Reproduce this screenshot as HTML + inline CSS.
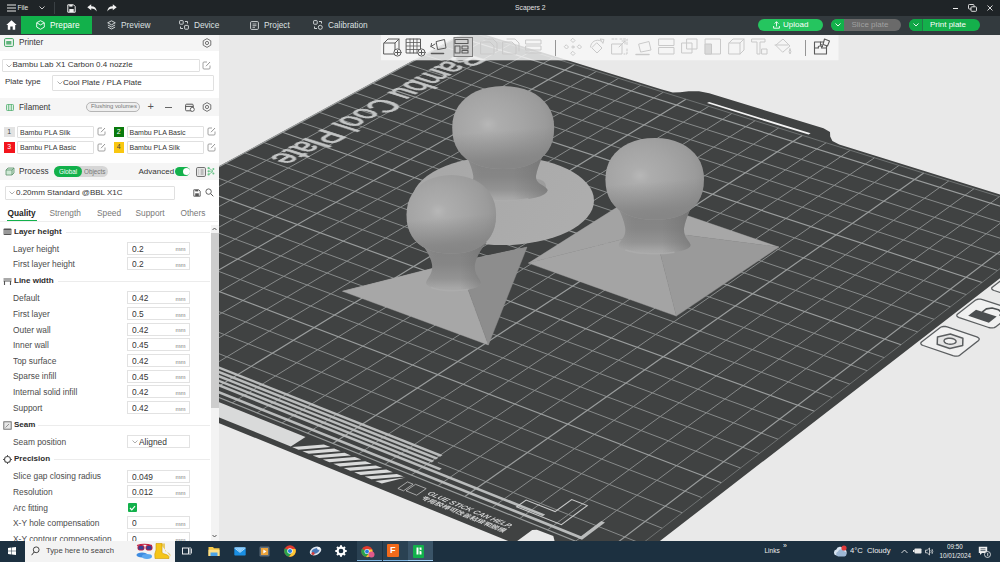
<!DOCTYPE html>
<html><head><meta charset="utf-8"><title>Scapers 2</title>
<style>
html,body{margin:0;padding:0;width:1000px;height:562px;overflow:hidden;background:#e9e9e9;font-family:"Liberation Sans","Noto Sans CJK SC",sans-serif;}
*{box-sizing:border-box}
.t,.lbl,.grp,.tab,.inp b,.inp i,.ftxt{opacity:0.99}
.abs{position:absolute}
.t{position:absolute;white-space:nowrap;line-height:1;color:#3a3a3a}
#titlebar{position:absolute;left:0;top:0;width:1000px;height:16px;background:#1f2427}
#tabbar{position:absolute;left:0;top:16px;width:1000px;height:18.7px;z-index:2;background:#333a3e}
#sidebar{position:absolute;left:0;top:34px;width:219px;height:508px;background:#fff;overflow:hidden}
#taskbar{position:absolute;left:0;top:541px;width:1000px;height:21px;background:#1c3040}
.hdr{position:absolute;left:0;width:219px;background:#f5f5f5}
.box{position:absolute;border:1px solid #e0e0e0;background:#fff;border-radius:1px}
.lbl{position:absolute;white-space:nowrap;line-height:1;font-size:8.4px;margin-top:0.4px;color:#4a4a4a;left:13px}
.grp{position:absolute;white-space:nowrap;line-height:1;font-size:8px;color:#2a2a2a;font-weight:bold;left:14px}
.inp{position:absolute;left:127px;width:63px;height:13px;border:1px solid #e2e2e2;background:#fff}
.inp b{position:absolute;left:4px;top:2px;font-weight:normal;font-size:8.4px;line-height:1;color:#333}
.inp i{position:absolute;right:3.5px;top:3.8px;font-style:normal;font-size:6px;line-height:1;color:#7c7c7c}
.gl{position:absolute;height:1px;background:#ececec;right:9px}
.tab{position:absolute;white-space:nowrap;line-height:1;font-size:8.3px;color:#dfe3e4;top:4.7px}
</style></head>
<body>
<svg width="782" height="508" viewBox="218 34 782 508" style="position:absolute;left:218px;top:34px">
<rect x="218" y="34" width="782" height="508" fill="#e9e9e9"/>
<polygon points="-43.8,309.3 -45.3,310.3 -46.3,311.5 -46.7,312.7 -46.4,313.9 -45.5,314.9 -44.0,315.7 513.9,543.4 532.2,530.0 536.9,529.7 553.3,535.9 559.9,562.2 598.7,578.0 601.1,578.8 603.9,579.1 606.7,579.1 609.4,578.7 611.8,577.8 613.7,576.7 1073.1,221.9 1074.0,220.9 1074.2,219.9 1073.9,218.8 1072.9,217.7 1071.5,216.8 1069.6,216.1 839.2,144.6 832.4,141.0 830.2,136.6 830.0,132.0 823.5,128.3 709.2,93.3 699.0,91.2 688.6,91.3 680.1,92.3 672.7,92.6 661.1,89.3 475.8,31.8 474.0,31.4 472.0,31.2 469.9,31.3 467.9,31.5 466.1,32.0 464.6,32.6" fill="#404242"/>
<g stroke="#878a8a" stroke-width="1.0"><line x1="-2.4" y1="308.4" x2="488.7" y2="38.0"/><line x1="437.9" y1="462.5" x2="641.9" y2="543.8"/><line x1="20.1" y1="317.4" x2="509.9" y2="44.5"/><line x1="19.8" y1="275.3" x2="662.2" y2="528.2"/><line x1="42.7" y1="326.5" x2="531.3" y2="51.2"/><line x1="41.6" y1="263.4" x2="682.2" y2="512.8"/><line x1="65.6" y1="335.8" x2="552.8" y2="57.9"/><line x1="63.1" y1="251.7" x2="702.0" y2="497.7"/><line x1="112.0" y1="354.5" x2="596.4" y2="71.4"/><line x1="105.3" y1="228.7" x2="740.5" y2="468.0"/><line x1="135.6" y1="364.0" x2="618.5" y2="78.3"/><line x1="126.0" y1="217.5" x2="759.4" y2="453.5"/><line x1="159.4" y1="373.5" x2="640.8" y2="85.2"/><line x1="146.4" y1="206.4" x2="778.0" y2="439.2"/><line x1="183.4" y1="383.2" x2="663.3" y2="92.2"/><line x1="166.5" y1="195.4" x2="796.4" y2="425.1"/><line x1="232.2" y1="402.9" x2="708.8" y2="106.3"/><line x1="206.1" y1="173.8" x2="832.2" y2="397.6"/><line x1="257.0" y1="412.9" x2="731.8" y2="113.5"/><line x1="225.5" y1="163.3" x2="849.8" y2="384.1"/><line x1="282.0" y1="423.0" x2="755.1" y2="120.7"/><line x1="244.7" y1="152.8" x2="867.2" y2="370.7"/><line x1="307.3" y1="433.2" x2="778.6" y2="128.0"/><line x1="263.7" y1="142.5" x2="884.2" y2="357.6"/><line x1="358.7" y1="453.9" x2="826.1" y2="142.8"/><line x1="300.9" y1="122.3" x2="917.7" y2="331.9"/><line x1="384.9" y1="464.4" x2="850.2" y2="150.3"/><line x1="319.2" y1="112.3" x2="934.1" y2="319.3"/><line x1="411.2" y1="475.0" x2="874.5" y2="157.8"/><line x1="337.2" y1="102.5" x2="950.3" y2="306.8"/><line x1="437.9" y1="485.8" x2="899.0" y2="165.4"/><line x1="355.1" y1="92.8" x2="966.3" y2="294.6"/><line x1="492.1" y1="507.6" x2="948.8" y2="180.9"/><line x1="390.1" y1="73.7" x2="997.6" y2="270.5"/><line x1="519.6" y1="518.7" x2="974.0" y2="188.7"/><line x1="407.3" y1="64.3" x2="1013.0" y2="258.7"/><line x1="547.5" y1="529.9" x2="999.4" y2="196.6"/><line x1="424.4" y1="55.0" x2="1028.1" y2="247.1"/><line x1="575.6" y1="541.2" x2="1025.1" y2="204.6"/><line x1="441.2" y1="45.9" x2="1043.1" y2="235.6"/></g>
<g stroke="#9a9d9d" stroke-width="1.18"><line x1="-24.6" y1="299.4" x2="467.7" y2="31.4"/><line x1="-24.6" y1="299.4" x2="621.3" y2="559.6"/><line x1="88.7" y1="345.1" x2="574.5" y2="64.6"/><line x1="84.3" y1="240.1" x2="721.4" y2="482.7"/><line x1="207.7" y1="393.0" x2="685.9" y2="99.2"/><line x1="186.5" y1="184.5" x2="814.4" y2="411.3"/><line x1="332.9" y1="443.5" x2="802.2" y2="135.4"/><line x1="282.4" y1="132.3" x2="901.1" y2="344.7"/><line x1="464.9" y1="496.6" x2="923.8" y2="173.1"/><line x1="372.7" y1="83.2" x2="982.1" y2="282.5"/><line x1="604.1" y1="552.7" x2="1051.0" y2="212.6"/><line x1="457.8" y1="36.8" x2="1057.9" y2="224.2"/></g>
<g stroke="#7a7d7e" stroke-width="0.8"><line x1="621.3" y1="559.6" x2="1066.6" y2="217.5"/><line x1="467.7" y1="31.4" x2="1066.6" y2="217.5"/></g>
<g><polygon points="22.0,290.7 440.1,456.7 442.6,454.9 24.7,289.3" fill="#babcbc"/><polygon points="17.6,293.2 435.9,459.6 438.4,457.8 20.3,291.7" fill="#babcbc"/><polygon points="13.3,295.5 431.8,462.4 434.3,460.7 15.9,294.1" fill="#babcbc"/><polygon points="8.6,298.1 439.3,470.2 441.8,468.5 11.3,296.6" fill="#babcbc"/><polygon points="4.1,300.6 542.7,516.3 545.2,514.5 6.8,299.1" fill="#babcbc"/><polygon points="-2.8,304.4 580.5,538.9 583.0,537.0 -0.1,302.9" fill="#babcbc"/><polygon points="578.4,538.2 582.0,539.7 605.0,522.5 601.3,521.0" fill="#babcbc"/><polygon points="-26.5,317.4 290.8,446.5 305.5,437.0 -11.3,309.1" fill="#d9dada"/><polygon points="292.1,447.1 298.5,449.7 330.4,447.0 323.9,444.4" fill="#dadbdb"/><polygon points="302.3,451.2 308.8,453.8 340.7,451.2 334.2,448.6" fill="#dadbdb"/><polygon points="312.6,455.4 319.1,458.0 351.0,455.4 344.6,452.8" fill="#dadbdb"/><polygon points="322.9,459.6 329.4,462.2 361.4,459.6 354.9,457.0" fill="#dadbdb"/><polygon points="333.3,463.8 339.8,466.5 371.9,463.8 365.4,461.2" fill="#dadbdb"/><polygon points="343.7,468.1 350.2,470.7 382.4,468.0 375.8,465.4" fill="#dadbdb"/><polygon points="354.2,472.3 360.7,475.0 392.9,472.3 386.3,469.6" fill="#dadbdb"/><polygon points="364.7,476.6 371.3,479.3 403.5,476.6 396.9,473.9" fill="#dadbdb"/><polygon points="375.2,480.9 381.8,483.6 405.6,477.4 405.6,477.4" fill="#dadbdb"/><polygon points="397.9,488.5 407.5,481.9 413.1,484.2 403.5,490.8" fill="none" stroke="#d0d0d0" stroke-width="0.7"/><polygon points="406.0,490.8 415.5,484.3 426.2,488.6 416.7,495.2" fill="none" stroke="#d0d0d0" stroke-width="0.7"/><polygon points="516.7,506.8 526.1,500.0 555.1,511.6 571.7,499.5 587.2,505.6 561.4,524.7" fill="none" stroke="#c9caca" stroke-width="1.1"/></g>
<polygon points="707.0,103.1 808.6,134.6 810.6,133.3 709.1,101.9" fill="#f4f4f4"/>
<g opacity="0.99">
<text transform="matrix(-1.6667 0.9176 -2.1163 -0.6664 463.52 51.47)" font-family="Liberation Sans,sans-serif" font-size="16.3" fill="#c6c8c8" stroke="#c6c8c8" stroke-width="0.45" textLength="117" lengthAdjust="spacingAndGlyphs">Bambu Cool Plate</text>
<text transform="matrix(2.6867 1.0894 -2.1580 1.4995 426.41 494.33)" font-family="Liberation Sans,sans-serif" font-size="2.9" font-weight="bold" font-style="italic" fill="#d4d5d5" textLength="31" lengthAdjust="spacingAndGlyphs">GLUE STICK CAN HELP.</text>
<text transform="matrix(2.6890 1.0941 -2.1673 1.5059 420.14 498.69)" font-family="Liberation Sans,Noto Sans CJK SC,sans-serif" font-size="2.5" font-weight="bold" fill="#d4d5d5" textLength="31" lengthAdjust="spacingAndGlyphs">专用胶棒可改善粘接和脱模</text>
</g>
<polygon points="921.5,342.0 920.8,342.9 920.9,343.9 921.7,344.8 923.2,345.5 952.9,355.7 954.8,356.1 956.8,356.2 958.6,355.8 960.0,355.1 978.6,340.4 979.2,339.5 979.1,338.5 978.2,337.6 976.8,336.9 947.2,326.9 945.4,326.5 943.4,326.5 941.6,326.8 940.3,327.5" fill="#f0f0f0" stroke="#5b5e60" stroke-width="1.3" stroke-linejoin="round"/>
<polygon points="962.7,345.5 962.9,338.2 950.3,334.0 937.5,336.9 937.2,344.2 949.8,348.5" fill="#e4e4e4" stroke="#5b5e60" stroke-width="1.5" stroke-linejoin="round"/>
<polygon points="955.3,343.0 956.0,342.0 956.0,341.0 955.3,340.0 954.0,339.1 952.2,338.5 950.1,338.2 948.1,338.3 946.2,338.7 944.8,339.4 944.1,340.4 944.1,341.4 944.7,342.4 946.1,343.3 947.9,343.9 950.0,344.2 952.0,344.1 953.9,343.7" fill="#f0f0f0" stroke="#5b5e60" stroke-width="1.4"/>
<polygon points="957.4,314.2 956.8,315.1 956.9,316.0 957.7,316.9 959.2,317.6 988.7,327.5 990.5,327.9 992.5,327.9 994.3,327.6 995.6,326.9 1013.6,312.7 1014.3,311.8 1014.1,310.8 1013.3,309.9 1011.8,309.2 982.5,299.6 980.7,299.2 978.7,299.1 976.9,299.5 975.6,300.1" fill="#f0f0f0" stroke="#5b5e60" stroke-width="1.3" stroke-linejoin="round"/>
<polygon points="968.2,315.8 988.9,322.7 996.7,316.6 976.0,309.7" fill="#4b4e50"/>
<polyline points="982.5,311.9 986.3,308.9 992.1,308.0 998.4,309.7 1001.7,312.6 1000.0,315.2" fill="none" stroke="#4b4e50" stroke-width="1.6" stroke-linecap="round" stroke-linejoin="round"/>
<polygon points="992.3,287.2 991.7,288.0 991.8,289.0 992.7,289.9 994.1,290.5 1023.3,300.1 1025.2,300.5 1027.1,300.5 1028.9,300.2 1030.2,299.6 1047.7,285.7 1048.3,284.9 1048.1,283.9 1047.3,283.1 1045.8,282.4 1016.8,273.0 1014.9,272.6 1013.0,272.6 1011.3,272.9 1010.0,273.5" fill="#f0f0f0" stroke="#5b5e60" stroke-width="1.3" stroke-linejoin="round"/>
<polygon points="1026.2,261.0 1025.6,261.8 1025.8,262.7 1026.6,263.6 1028.1,264.2 1057.0,273.5 1058.9,273.9 1060.8,273.9 1062.5,273.6 1063.7,273.0 1080.8,259.5 1081.3,258.7 1081.2,257.8 1080.3,257.0 1078.8,256.3 1050.0,247.2 1048.2,246.8 1046.3,246.8 1044.6,247.1 1043.4,247.7" fill="#f0f0f0" stroke="#5b5e60" stroke-width="1.3" stroke-linejoin="round"/>
<defs>
<radialGradient id="sph" cx="0.38" cy="0.46" r="0.72" fx="0.35" fy="0.46">
<stop offset="0" stop-color="#b7b7b7"/><stop offset="0.14" stop-color="#adadad"/><stop offset="0.45" stop-color="#a5a5a5"/><stop offset="0.75" stop-color="#9b9b9b"/><stop offset="1" stop-color="#8b8b8b"/></radialGradient>
<linearGradient id="sphv" x1="0" x2="0.1" y1="0" y2="1"><stop offset="0" stop-color="#868686" stop-opacity="0"/><stop offset="0.58" stop-color="#868686" stop-opacity="0.0"/><stop offset="0.78" stop-color="#868686" stop-opacity="0.5"/><stop offset="0.92" stop-color="#868686" stop-opacity="0.9"/><stop offset="1" stop-color="#868686" stop-opacity="1"/></linearGradient>
<linearGradient id="neck" x1="0" x2="0" y1="0" y2="1"><stop offset="0" stop-color="#828282"/><stop offset="0.45" stop-color="#868686"/><stop offset="0.75" stop-color="#939393"/><stop offset="0.93" stop-color="#a6a6a6"/><stop offset="1" stop-color="#a9a9a9"/></linearGradient>
<linearGradient id="neckh" x1="0" x2="1" y1="0" y2="0"><stop offset="0" stop-color="#b0b0b0" stop-opacity="0.25"/><stop offset="0.25" stop-color="#909090" stop-opacity="0"/><stop offset="0.6" stop-color="#707070" stop-opacity="0"/><stop offset="1" stop-color="#6c6c6c" stop-opacity="0.55"/></linearGradient>
<linearGradient id="cone" x1="0" x2="1" y1="0" y2="0.3"><stop offset="0" stop-color="#a7a7a7"/><stop offset="0.55" stop-color="#aaaaaa"/><stop offset="1" stop-color="#adadad"/></linearGradient>
</defs>
<ellipse cx="503" cy="200.5" rx="91" ry="44.5" fill="url(#cone)"/>
<ellipse cx="536" cy="186" rx="10" ry="7" fill="#808080" opacity="0.35"/>
<path d="M467.0 156.6 C471.4 166.9 473.4 174.3 473.4 177.3 C473.4 184.3 463.7 185.6 461.7 190.0 A43.0 11.0 0 0 0 547.7 190.0 C545.7 185.6 536.0 184.3 536.0 177.3 C536.0 174.3 538.0 166.9 542.4 156.6 Z" fill="url(#neck)"/><path d="M467.0 156.6 C471.4 166.9 473.4 174.3 473.4 177.3 C473.4 184.3 463.7 185.6 461.7 190.0 A43.0 11.0 0 0 0 547.7 190.0 C545.7 185.6 536.0 184.3 536.0 177.3 C536.0 174.3 538.0 166.9 542.4 156.6 Z" fill="url(#neckh)"/><path d="M469.4 196.1 A43.0 11.0 0 0 0 528.4 198.8" fill="none" stroke="#aeaeae" stroke-width="1.6" opacity="0.7"/><polygon points="554.2,127.5 553.8,134.6 552.7,140.3 550.8,145.5 548.2,150.2 544.9,154.5 540.9,158.2 536.3,161.4 531.1,164.1 525.3,166.2 518.9,167.8 511.9,168.7 503.2,169.0 494.5,168.7 487.5,167.8 481.1,166.2 475.3,164.1 470.1,161.4 465.5,158.2 461.5,154.5 458.2,150.2 455.6,145.5 453.7,140.3 452.6,134.6 452.2,127.5 452.6,121.3 453.8,115.7 455.8,110.6 458.6,105.8 462.1,101.4 466.3,97.5 471.1,94.1 476.4,91.3 482.3,89.0 488.7,87.4 495.5,86.4 503.2,86.1 510.9,86.4 517.7,87.4 524.1,89.0 530.0,91.3 535.3,94.1 540.1,97.5 544.3,101.4 547.8,105.8 550.6,110.6 552.6,115.7 553.8,121.3" fill="url(#sph)"/><polygon points="554.2,127.5 553.8,134.6 552.7,140.3 550.8,145.5 548.2,150.2 544.9,154.5 540.9,158.2 536.3,161.4 531.1,164.1 525.3,166.2 518.9,167.8 511.9,168.7 503.2,169.0 494.5,168.7 487.5,167.8 481.1,166.2 475.3,164.1 470.1,161.4 465.5,158.2 461.5,154.5 458.2,150.2 455.6,145.5 453.7,140.3 452.6,134.6 452.2,127.5 452.6,121.3 453.8,115.7 455.8,110.6 458.6,105.8 462.1,101.4 466.3,97.5 471.1,94.1 476.4,91.3 482.3,89.0 488.7,87.4 495.5,86.4 503.2,86.1 510.9,86.4 517.7,87.4 524.1,89.0 530.0,91.3 535.3,94.1 540.1,97.5 544.3,101.4 547.8,105.8 550.6,110.6 552.6,115.7 553.8,121.3" fill="url(#sphv)"/>
<polygon points="528.5,263.1 633.2,197.0 654.5,231.0" fill="#a3a3a3" stroke="#a3a3a3" stroke-width="0.4"/>
<polygon points="633.2,197.0 778.9,247.1 654.5,231.0" fill="#a7a7a7" stroke="#a7a7a7" stroke-width="0.4"/>
<polygon points="528.5,263.1 676.3,316.1 654.5,231.0" fill="#a4a4a4" stroke="#a4a4a4" stroke-width="0.4"/>
<polygon points="676.3,316.1 778.9,247.1 654.5,231.0" fill="#9a9a9a" stroke="#9a9a9a" stroke-width="0.4"/>
<path d="M618.2 207.5 C623.4 218.6 625.4 226.6 625.4 229.6 C625.4 238.1 620.7 239.6 618.7 245.0 A36.0 9.0 0 0 0 690.7 245.0 C688.7 239.6 684.0 238.1 684.0 229.6 C684.0 226.6 686.0 218.6 691.2 207.5 Z" fill="url(#neck)"/><path d="M618.2 207.5 C623.4 218.6 625.4 226.6 625.4 229.6 C625.4 238.1 620.7 239.6 618.7 245.0 A36.0 9.0 0 0 0 690.7 245.0 C688.7 239.6 684.0 238.1 684.0 229.6 C684.0 226.6 686.0 218.6 691.2 207.5 Z" fill="url(#neckh)"/><path d="M625.2 249.9 A36.0 9.0 0 0 0 674.5 252.2" fill="none" stroke="#aeaeae" stroke-width="1.6" opacity="0.7"/><polygon points="704.0,179.2 703.6,186.1 702.5,191.7 700.7,196.8 698.2,201.4 695.0,205.5 691.2,209.2 686.7,212.3 681.7,214.9 676.1,217.0 669.9,218.5 663.1,219.4 654.7,219.7 646.3,219.4 639.5,218.5 633.3,217.0 627.7,214.9 622.7,212.3 618.2,209.2 614.4,205.5 611.2,201.4 608.7,196.8 606.9,191.7 605.8,186.1 605.4,179.2 605.8,173.0 607.0,167.5 608.9,162.3 611.6,157.6 615.0,153.2 619.0,149.4 623.6,146.0 628.8,143.2 634.5,140.9 640.7,139.3 647.3,138.3 654.7,138.0 662.1,138.3 668.7,139.3 674.9,140.9 680.6,143.2 685.8,146.0 690.4,149.4 694.4,153.2 697.8,157.6 700.5,162.3 702.4,167.5 703.6,173.0" fill="url(#sph)"/><polygon points="704.0,179.2 703.6,186.1 702.5,191.7 700.7,196.8 698.2,201.4 695.0,205.5 691.2,209.2 686.7,212.3 681.7,214.9 676.1,217.0 669.9,218.5 663.1,219.4 654.7,219.7 646.3,219.4 639.5,218.5 633.3,217.0 627.7,214.9 622.7,212.3 618.2,209.2 614.4,205.5 611.2,201.4 608.7,196.8 606.9,191.7 605.8,186.1 605.4,179.2 605.8,173.0 607.0,167.5 608.9,162.3 611.6,157.6 615.0,153.2 619.0,149.4 623.6,146.0 628.8,143.2 634.5,140.9 640.7,139.3 647.3,138.3 654.7,138.0 662.1,138.3 668.7,139.3 674.9,140.9 680.6,143.2 685.8,146.0 690.4,149.4 694.4,153.2 697.8,157.6 700.5,162.3 702.4,167.5 703.6,173.0" fill="url(#sphv)"/>
<polygon points="342.6,291.3 527.0,247.3 458.0,262.0" fill="#a6a6a6" stroke="#a6a6a6" stroke-width="0.4"/>
<polygon points="342.6,291.3 488.4,345.0 458.0,262.0" fill="#a7a7a7" stroke="#a7a7a7" stroke-width="0.4"/>
<polygon points="488.4,345.0 527.0,247.3 458.0,262.0" fill="#8d8d8d" stroke="#8d8d8d" stroke-width="0.4"/>
<path d="M420.3 241.9 C430.2 254.1 432.2 263.3 432.2 266.3 C432.2 275.2 428.0 276.8 426.0 282.5 A27.5 8.5 0 0 0 481.0 282.5 C479.0 276.8 474.8 275.2 474.8 266.3 C474.8 263.3 476.8 254.1 486.7 241.9 Z" fill="url(#neck)"/><path d="M420.3 241.9 C430.2 254.1 432.2 263.3 432.2 266.3 C432.2 275.2 428.0 276.8 426.0 282.5 A27.5 8.5 0 0 0 481.0 282.5 C479.0 276.8 474.8 275.2 474.8 266.3 C474.8 263.3 476.8 254.1 486.7 241.9 Z" fill="url(#neckh)"/><path d="M430.9 287.2 A27.5 8.5 0 0 0 468.6 289.3" fill="none" stroke="#aeaeae" stroke-width="1.6" opacity="0.7"/><polygon points="496.1,214.6 495.8,221.2 494.8,226.6 493.1,231.5 490.8,235.9 487.9,239.9 484.4,243.5 480.4,246.5 475.8,249.0 470.7,251.0 465.1,252.4 458.9,253.3 451.3,253.6 443.7,253.3 437.5,252.4 431.9,251.0 426.8,249.0 422.2,246.5 418.2,243.5 414.7,239.9 411.8,235.9 409.5,231.5 407.8,226.6 406.8,221.2 406.5,214.6 406.9,208.7 407.9,203.4 409.7,198.4 412.1,193.9 415.2,189.7 418.8,186.0 423.1,182.8 427.8,180.0 433.0,177.9 438.6,176.4 444.6,175.4 451.3,175.1 458.0,175.4 464.0,176.4 469.6,177.9 474.8,180.0 479.5,182.8 483.8,186.0 487.4,189.7 490.5,193.9 492.9,198.4 494.7,203.4 495.7,208.7" fill="url(#sph)"/><polygon points="496.1,214.6 495.8,221.2 494.8,226.6 493.1,231.5 490.8,235.9 487.9,239.9 484.4,243.5 480.4,246.5 475.8,249.0 470.7,251.0 465.1,252.4 458.9,253.3 451.3,253.6 443.7,253.3 437.5,252.4 431.9,251.0 426.8,249.0 422.2,246.5 418.2,243.5 414.7,239.9 411.8,235.9 409.5,231.5 407.8,226.6 406.8,221.2 406.5,214.6 406.9,208.7 407.9,203.4 409.7,198.4 412.1,193.9 415.2,189.7 418.8,186.0 423.1,182.8 427.8,180.0 433.0,177.9 438.6,176.4 444.6,175.4 451.3,175.1 458.0,175.4 464.0,176.4 469.6,177.9 474.8,180.0 479.5,182.8 483.8,186.0 487.4,189.7 490.5,193.9 492.9,198.4 494.7,203.4 495.7,208.7" fill="url(#sphv)"/>
<rect x="381" y="34" width="457.5" height="26.3" fill="#f8f8f8" opacity="0.82"/>
<g transform="translate(383 38)" fill="none" stroke="#5a5a5a" stroke-width="1.0" stroke-linejoin="round" stroke-linecap="round"><path d="M1 5L5 1H16V12L12 16H1Z M1 5H12V16 M12 5L16 1"/><circle cx="14.5" cy="14.5" r="3.6" fill="#f7f7f7"/><path d="M12.5 14.5H16.5M14.5 12.5V16.5"/></g>
<g transform="translate(405.5 38)" fill="none" stroke="#5a5a5a" stroke-width="1.0" stroke-linejoin="round" stroke-linecap="round"><rect x="1" y="1" width="14" height="14"/><path d="M4.5 1V15M8 1V15M11.5 1V15M1 4.5H15M1 8H15M1 11.5H15" stroke-width="0.8"/><circle cx="16" cy="14.5" r="3.6" fill="#f7f7f7"/><path d="M14 14.5H18M16 12.5V16.5"/></g>
<g transform="translate(429.5 38)" fill="none" stroke="#5a5a5a" stroke-width="1.0" stroke-linejoin="round" stroke-linecap="round"><path d="M7 3.5L15 1.5L16.5 10L8.5 11.5Z"/><path d="M2 15.5H14" stroke-width="1.6"/><path d="M1.5 8.5L5 10.5M1.5 8.5L2 5.5M1.5 8.5L5.5 6"/></g>
<rect x="454" y="37.5" width="18.5" height="19" fill="#cfcfcf" stroke="#7d7d7d" stroke-width="1"/>
<g transform="translate(453.5 38)" fill="none" stroke="#5a5a5a" stroke-width="1.1" stroke-linejoin="round" stroke-linecap="round"><rect x="1.5" y="1.5" width="13" height="4"/><rect x="1.5" y="8" width="5" height="7"/><rect x="8.5" y="8" width="6" height="3"/><rect x="8.5" y="12.5" width="6" height="2.5"/></g>
<g transform="translate(480 38)" fill="none" stroke="#c9c9c9" stroke-width="1.0" stroke-linejoin="round" stroke-linecap="round"><path d="M1 4H10L14 8V16H1Z M5 1H13L17 5V13"/></g>
<g transform="translate(502 38)" fill="none" stroke="#c9c9c9" stroke-width="1.0" stroke-linejoin="round" stroke-linecap="round"><path d="M1 4H10L14 8V16H1Z M5 1H13L17 5V13"/></g>
<g transform="translate(525 38)" fill="none" stroke="#c9c9c9" stroke-width="1.0" stroke-linejoin="round" stroke-linecap="round"><rect x="1" y="2" width="15" height="4"/><rect x="1" y="8" width="15" height="4"/><path d="M1 15H16"/></g>
<line x1="555.5" y1="40" x2="555.5" y2="56" stroke="#8a8a8a" stroke-width="0.9"/>
<g transform="translate(564 38)" fill="none" stroke="#c9c9c9" stroke-width="1.0" stroke-linejoin="round" stroke-linecap="round"><path d="M9 0.5L11 2.5L9 4.5L7 2.5Z M9 13.5L11 15.5L9 17.5L7 15.5Z M2.5 7L4.5 9L2.5 11L0.5 9Z M15.5 7L17.5 9L15.5 11L13.5 9Z"/><circle cx="9" cy="9" r="1.1"/></g>
<g transform="translate(588 38)" fill="none" stroke="#c9c9c9" stroke-width="1.0" stroke-linejoin="round" stroke-linecap="round"><path d="M9 5L14 10L9 15L4 10Z"/><path d="M2.5 9A7 7 0 0 1 13 3"/><path d="M12.5 1L16 1.5L15 5Z"/></g>
<g transform="translate(611 38)" fill="none" stroke="#c9c9c9" stroke-width="1.0" stroke-linejoin="round" stroke-linecap="round"><rect x="1" y="6" width="10" height="10"/><path d="M1 1H6M9 1H16V8M16 11V16H13" stroke-dasharray="2 1.5"/><path d="M8 9L14 3M14 3H11M14 3V6"/></g>
<g transform="translate(635 38)" fill="none" stroke="#c9c9c9" stroke-width="1.0" stroke-linejoin="round" stroke-linecap="round"><path d="M4 6L14 3.5L16 12L6 14Z"/><path d="M1 16.5H14" stroke-width="1.5"/></g>
<g transform="translate(658 38)" fill="none" stroke="#c9c9c9" stroke-width="1.0" stroke-linejoin="round" stroke-linecap="round"><rect x="1" y="1" width="15" height="6.5"/><rect x="1" y="9.5" width="15" height="6.5"/></g>
<g transform="translate(681 38)" fill="none" stroke="#c9c9c9" stroke-width="1.0" stroke-linejoin="round" stroke-linecap="round"><rect x="1" y="5" width="10" height="10"/><rect x="6" y="1" width="10" height="10"/></g>
<g transform="translate(704.5 38)" fill="none" stroke="#c9c9c9" stroke-width="1.0" stroke-linejoin="round" stroke-linecap="round"><rect x="1" y="1" width="15" height="15"/><rect x="1" y="6" width="6" height="10" fill="#d9d9d9"/></g>
<g transform="translate(728 38)" fill="none" stroke="#c9c9c9" stroke-width="1.0" stroke-linejoin="round" stroke-linecap="round"><path d="M1 5L5 1H16V12L12 16H1Z M1 5H12V16 M12 5L16 1"/></g>
<g transform="translate(751 38)" fill="none" stroke="#c9c9c9" stroke-width="1.0" stroke-linejoin="round" stroke-linecap="round"><path d="M1 1H14V4H9V16H6V4H1Z"/><rect x="11" y="11" width="5" height="5"/></g>
<g transform="translate(774 38)" fill="none" stroke="#c9c9c9" stroke-width="1.0" stroke-linejoin="round" stroke-linecap="round"><path d="M2 7L9 1L16 8L9 14Z M1 7H14"/><path d="M16 11Q18 14 16 16Q14 14 16 11Z"/></g>
<line x1="805.5" y1="40" x2="805.5" y2="56" stroke="#8a8a8a" stroke-width="0.9"/>
<g transform="translate(813.5 38)" fill="none" stroke="#5a5a5a" stroke-width="1.1" stroke-linejoin="round" stroke-linecap="round"><rect x="1" y="4" width="12" height="12"/><path d="M1 10H5Q4 8 6.5 8Q9 8 8 10H13M7 4V7Q9 6 9 8.5"/><path d="M11 1L16 3L14 8L9.5 6.5Z" fill="#f7f7f7"/></g>
</svg>
<div id="titlebar">
<svg class="abs" style="left:7px;top:4px" width="9" height="8" viewBox="0 0 9 8"><path d="M0 1H9M0 4H9M0 7H9" stroke="#e8e8e8" stroke-width="1"/></svg>
<div class="t" style="left:17.5px;top:4.7px;font-size:6.6px;color:#e8e8e8">File</div>
<svg class="abs" style="left:38.5px;top:6px" width="6" height="4" viewBox="0 0 6 4"><path d="M0.5 0.5L3 3L5.5 0.5" fill="none" stroke="#ddd" stroke-width="0.9"/></svg>
<div class="abs" style="left:54px;top:2px;width:1px;height:12px;background:#3a4044"></div>
<svg class="abs" style="left:67px;top:3.5px" width="9" height="9" viewBox="0 0 9 9"><path d="M0.8 0.8H6.5L8.2 2.5V8.2H0.8Z" fill="none" stroke="#f2f2f2" stroke-width="1"/><rect x="2.3" y="5" width="4.4" height="3.2" fill="#f2f2f2"/><rect x="2.3" y="0.8" width="3.2" height="1.8" fill="#f2f2f2"/></svg>
<svg class="abs" style="left:87px;top:4px" width="10" height="8" viewBox="0 0 10 8"><path d="M0.3 3.2L4.2 0.3V2.2C7.5 2.2 9.5 4 9.7 7.6C8.5 5.6 7 4.6 4.2 4.6V6.3Z" fill="#f2f2f2"/></svg>
<svg class="abs" style="left:107px;top:4px" width="10" height="8" viewBox="0 0 10 8"><path d="M9.7 3.2L5.8 0.3V2.2C2.5 2.2 0.5 4 0.3 7.6C1.5 5.6 3 4.6 5.8 4.6V6.3Z" fill="#f2f2f2"/></svg>
<div class="t" style="left:515px;top:4.5px;font-size:6.8px;color:#e6e6e6">Scapers 2</div>
<div class="abs" style="left:952.5px;top:7.5px;width:5px;height:1px;background:#eee"></div>
<svg class="abs" style="left:968px;top:4px" width="9" height="8" viewBox="0 0 9 8"><rect x="0.5" y="0.5" width="5.5" height="4.5" rx="0.8" fill="none" stroke="#eee" stroke-width="0.9"/><rect x="3" y="2.8" width="5.5" height="4.5" rx="0.8" fill="#1f2427" stroke="#eee" stroke-width="0.9"/></svg>
<svg class="abs" style="left:986.5px;top:5px" width="6" height="6" viewBox="0 0 6 6"><path d="M0.5 0.5L5.5 5.5M5.5 0.5L0.5 5.5" stroke="#eee" stroke-width="0.9"/></svg>
</div>
<div id="tabbar">
<svg class="abs" style="left:5.5px;top:3.5px" width="11" height="10" viewBox="0 0 11 10"><path d="M5.5 0.3L0.3 5H1.8V9.7H4.3V6.5H6.7V9.7H9.2V5H10.7Z" fill="#fff"/></svg>
<div class="abs" style="left:21px;top:0;width:71px;height:18px;background:#12b14b"></div>
<svg class="abs" style="left:35.5px;top:4px" width="9" height="10" viewBox="0 0 9 10"><path d="M4.5 0.7L8.3 2.7V7.1L4.5 9.3L0.7 7.1V2.7Z" fill="none" stroke="#fff" stroke-width="0.9" stroke-linejoin="round"/><path d="M0.9 2.9L4.5 4.9L8.1 2.9" fill="none" stroke="#fff" stroke-width="0.9"/></svg>
<div class="tab" style="left:50px;color:#fff">Prepare</div>
<svg class="abs" style="left:106.5px;top:4px" width="9" height="10" viewBox="0 0 9 10"><path d="M4.5 0.8L8.3 2.8L4.5 4.8L0.7 2.8Z M0.9 5L4.5 6.9L8.1 5 M0.9 7.1L4.5 9L8.1 7.1" fill="none" stroke="#dfe3e4" stroke-width="0.9" stroke-linejoin="round"/></svg>
<div class="tab" style="left:121px">Preview</div>
<svg class="abs" style="left:179px;top:4px" width="10" height="10" viewBox="0 0 10 10"><rect x="0.6" y="0.6" width="3.6" height="3.6" rx="0.6" fill="none" stroke="#dfe3e4" stroke-width="0.9"/><rect x="5.6" y="5.4" width="3.8" height="3.8" rx="0.6" fill="none" stroke="#dfe3e4" stroke-width="0.9"/><path d="M6 1.5H8.5V3.5M4 8.5H1.5V6.5" fill="none" stroke="#dfe3e4" stroke-width="0.9"/></svg>
<div class="tab" style="left:194px">Device</div>
<svg class="abs" style="left:250px;top:4.5px" width="9" height="9" viewBox="0 0 9 9"><rect x="0.6" y="0.6" width="7.8" height="7.8" rx="1" fill="none" stroke="#dfe3e4" stroke-width="0.9"/><path d="M2.5 3H6.5M2.5 4.7H6.5M2.5 6.3H5" stroke="#dfe3e4" stroke-width="0.8"/></svg>
<div class="tab" style="left:264px">Project</div>
<svg class="abs" style="left:312.5px;top:4px" width="10" height="10" viewBox="0 0 10 10"><rect x="0.6" y="0.6" width="3.6" height="3.6" rx="0.6" fill="none" stroke="#dfe3e4" stroke-width="0.9"/><circle cx="7.3" cy="7.3" r="2" fill="none" stroke="#dfe3e4" stroke-width="0.9"/><path d="M6 1.5H8.5V3.5M4 8.5H1.5V6.5" fill="none" stroke="#dfe3e4" stroke-width="0.9"/></svg>
<div class="tab" style="left:328px">Calibration</div>
<div class="abs" style="left:758px;top:2.5px;width:65px;height:12.5px;border-radius:6.5px;background:#25c55f"></div>
<svg class="abs" style="left:773px;top:5px" width="7" height="8" viewBox="0 0 7 8"><path d="M3.5 5.5V0.8M1.6 2.6L3.5 0.7L5.4 2.6M0.6 5V7.2H6.4V5" fill="none" stroke="#fff" stroke-width="0.9"/></svg>
<div class="t" style="left:783px;top:5px;font-size:8px;color:#fff">Upload</div>
<div class="abs" style="left:831px;top:2.5px;width:70px;height:12.5px;border-radius:6.5px;background:#6a6a6a;overflow:hidden"><div class="abs" style="left:0;top:0;width:12.5px;height:12.5px;background:#12b14b"></div></div>
<svg class="abs" style="left:834.5px;top:7px" width="6" height="4" viewBox="0 0 6 4"><path d="M0.5 0.5L3 3L5.5 0.5" fill="none" stroke="#fff" stroke-width="0.9"/></svg>
<div class="t" style="left:851.5px;top:5px;font-size:8px;color:#a2a2a2">Slice plate</div>
<div class="abs" style="left:909px;top:2.5px;width:71px;height:12.5px;border-radius:6.5px;background:#14b04b;overflow:hidden"><div class="abs" style="left:0;top:0;width:12.5px;height:12.5px;background:#10a646"></div><div class="abs" style="left:12.5px;top:0;width:1px;height:12.5px;background:#36404a;opacity:.5"></div></div>
<svg class="abs" style="left:912.5px;top:7px" width="6" height="4" viewBox="0 0 6 4"><path d="M0.5 0.5L3 3L5.5 0.5" fill="none" stroke="#fff" stroke-width="0.9"/></svg>
<div class="t" style="left:930px;top:5px;font-size:8px;color:#fff">Print plate</div>
</div>
<div id="sidebar">
<div class="hdr" style="top:0;height:16.5px"></div>
<svg class="abs" style="left:4px;top:3.5px" width="10" height="9" viewBox="0 0 10 9"><rect x="0.6" y="0.6" width="8.8" height="7.8" rx="1" fill="none" stroke="#3aa35c" stroke-width="1"/><rect x="2.2" y="3" width="5.2" height="3.6" fill="#3aa35c" opacity="0.8"/></svg>
<div class="t" style="left:19px;top:4.9px;font-size:8.2px;color:#333">Printer</div>
<svg class="abs" style="left:201.5px;top:3.5px" width="10" height="10" viewBox="0 0 10 10"><path d="M5 0.6L8.8 2.8V7.2L5 9.4L1.2 7.2V2.8Z" fill="none" stroke="#666" stroke-width="0.9" stroke-linejoin="round"/><circle cx="5" cy="5" r="1.6" fill="none" stroke="#666" stroke-width="0.9"/></svg>
<div class="box" style="left:2px;top:24.5px;width:198px;height:13.5px"></div>
<svg class="abs" style="left:6px;top:29.5px" width="6" height="4" viewBox="0 0 6 4"><path d="M0.5 0.5L3 3L5.5 0.5" fill="none" stroke="#999" stroke-width="0.8"/></svg>
<div class="t" style="left:12.5px;top:27px;font-size:8px;color:#333">Bambu Lab X1 Carbon 0.4 nozzle</div>
<svg class="abs" style="left:201.5px;top:26.5px" width="9" height="9" viewBox="0 0 9 9"><path d="M5 1H2Q1 1 1 2V7Q1 8 2 8H7Q8 8 8 7V4.5" fill="none" stroke="#8a8a8a" stroke-width="0.8"/><path d="M4 5.2L8 1" stroke="#8a8a8a" stroke-width="0.9"/></svg>
<div class="t" style="left:5px;top:44px;font-size:8px;color:#333">Plate type</div>
<div class="box" style="left:52px;top:41px;width:161.5px;height:15.5px"></div>
<svg class="abs" style="left:56.5px;top:47px" width="6" height="4" viewBox="0 0 6 4"><path d="M0.5 0.5L3 3L5.5 0.5" fill="none" stroke="#999" stroke-width="0.8"/></svg>
<div class="t" style="left:63px;top:44.5px;font-size:8px;color:#333">Cool Plate / PLA Plate</div>
<div class="hdr" style="top:64px;height:17.5px"></div>
<svg class="abs" style="left:6px;top:69.8px" width="8" height="7" viewBox="0 0 9 8"><rect x="0.5" y="0.5" width="8" height="7" rx="1" fill="#dff1e4" stroke="#3aa35c" stroke-width="0.8"/><path d="M3 0.5V7.5M6 0.5V7.5" stroke="#3aa35c" stroke-width="0.8"/></svg>
<div class="t" style="left:19px;top:69.9px;font-size:8.2px;color:#333">Filament</div>
<div class="abs" style="left:86px;top:67.5px;width:54px;height:10.5px;border:1px solid #b5b5b5;border-radius:5.5px;background:#efefef"></div>
<div class="t" style="left:91px;top:70.3px;font-size:5.9px;color:#777">Flushing volumes</div>
<div class="t" style="left:147.5px;top:67.3px;font-size:11px;color:#555">+</div>
<div class="abs" style="left:164.5px;top:72.7px;width:7px;height:1px;background:#666"></div>
<svg class="abs" style="left:185px;top:69px" width="10" height="9" viewBox="0 0 10 9"><rect x="0.6" y="1.2" width="7.6" height="6.6" rx="1" fill="none" stroke="#555" stroke-width="1"/><path d="M0.6 3.4H8.2" stroke="#555" stroke-width="1"/><circle cx="7.3" cy="6.4" r="2" fill="#fff" stroke="#555" stroke-width="0.9"/></svg>
<svg class="abs" style="left:201.5px;top:68px" width="10" height="10" viewBox="0 0 10 10"><path d="M5 0.6L8.8 2.8V7.2L5 9.4L1.2 7.2V2.8Z" fill="none" stroke="#666" stroke-width="0.9" stroke-linejoin="round"/><circle cx="5" cy="5" r="1.6" fill="none" stroke="#666" stroke-width="0.9"/></svg>
<div class="abs" style="left:4px;top:92.5px;width:10.5px;height:10.5px;background:#e3e3e3;color:#444;font-size:7px;line-height:10.5px;text-align:center">1</div>
<div class="box" style="left:17px;top:91.5px;width:77px;height:12.5px"></div>
<div class="t" style="left:20px;top:94.5px;font-size:7px;color:#333">Bambu PLA Silk</div>
<svg class="abs" style="left:97px;top:93.0px" width="9" height="9" viewBox="0 0 9 9"><path d="M5 1H2Q1 1 1 2V7Q1 8 2 8H7Q8 8 8 7V4.5" fill="none" stroke="#8a8a8a" stroke-width="0.8"/><path d="M4 5.2L8 1" stroke="#8a8a8a" stroke-width="0.9"/></svg>
<div class="abs" style="left:113.5px;top:92.5px;width:10.5px;height:10.5px;background:#0a7a0c;color:#fff;font-size:7px;line-height:10.5px;text-align:center">2</div>
<div class="box" style="left:126.5px;top:91.5px;width:77px;height:12.5px"></div>
<div class="t" style="left:129.5px;top:94.5px;font-size:7px;color:#333">Bambu PLA Basic</div>
<svg class="abs" style="left:206.5px;top:93.0px" width="9" height="9" viewBox="0 0 9 9"><path d="M5 1H2Q1 1 1 2V7Q1 8 2 8H7Q8 8 8 7V4.5" fill="none" stroke="#8a8a8a" stroke-width="0.8"/><path d="M4 5.2L8 1" stroke="#8a8a8a" stroke-width="0.9"/></svg>
<div class="abs" style="left:4px;top:108px;width:10.5px;height:10.5px;background:#f3141c;color:#fff;font-size:7px;line-height:10.5px;text-align:center">3</div>
<div class="box" style="left:17px;top:107px;width:77px;height:12.5px"></div>
<div class="t" style="left:20px;top:110px;font-size:7px;color:#333">Bambu PLA Basic</div>
<svg class="abs" style="left:97px;top:108.5px" width="9" height="9" viewBox="0 0 9 9"><path d="M5 1H2Q1 1 1 2V7Q1 8 2 8H7Q8 8 8 7V4.5" fill="none" stroke="#8a8a8a" stroke-width="0.8"/><path d="M4 5.2L8 1" stroke="#8a8a8a" stroke-width="0.9"/></svg>
<div class="abs" style="left:113.5px;top:108px;width:10.5px;height:10.5px;background:#f9c711;color:#444;font-size:7px;line-height:10.5px;text-align:center">4</div>
<div class="box" style="left:126.5px;top:107px;width:77px;height:12.5px"></div>
<div class="t" style="left:129.5px;top:110px;font-size:7px;color:#333">Bambu PLA Silk</div>
<svg class="abs" style="left:206.5px;top:108.5px" width="9" height="9" viewBox="0 0 9 9"><path d="M5 1H2Q1 1 1 2V7Q1 8 2 8H7Q8 8 8 7V4.5" fill="none" stroke="#8a8a8a" stroke-width="0.8"/><path d="M4 5.2L8 1" stroke="#8a8a8a" stroke-width="0.9"/></svg>
<div class="hdr" style="top:129px;height:16.5px"></div>
<svg class="abs" style="left:5px;top:133px" width="10" height="9" viewBox="0 0 10 9"><path d="M1 3L3 1H9V6L7 8H1Z" fill="#cfe9d6" stroke="#5a8f6a" stroke-width="0.8"/><path d="M1 3H7V8M7 3L9 1" fill="none" stroke="#5a8f6a" stroke-width="0.8"/></svg>
<div class="t" style="left:19px;top:133.7px;font-size:8.2px;color:#333">Process</div>
<div class="abs" style="left:54px;top:132px;width:54px;height:11px;border-radius:5.5px;background:#d6d6d6"></div>
<div class="abs" style="left:54px;top:132px;width:28px;height:11px;border-radius:5.5px;background:#12b14b"></div>
<div class="t" style="left:59px;top:134.8px;font-size:6.3px;color:#fff">Global</div>
<div class="t" style="left:84px;top:134.8px;font-size:6.3px;color:#777">Objects</div>
<div class="t" style="left:138.5px;top:133.5px;font-size:8px;color:#333">Advanced</div>
<div class="abs" style="left:175px;top:132.5px;width:15px;height:9.5px;border-radius:5px;background:#12b14b"></div>
<div class="abs" style="left:182.5px;top:133.7px;width:7px;height:7px;border-radius:4px;background:#fff"></div>
<svg class="abs" style="left:195.5px;top:132.5px" width="10" height="10" viewBox="0 0 10 10"><rect x="0.6" y="0.6" width="8.8" height="8.8" rx="1" fill="none" stroke="#555" stroke-width="0.9"/><path d="M2.3 3H3.3M4.5 3H7.7M2.3 5H3.3M4.5 5H7.7M2.3 7H3.3M4.5 7H7.7" stroke="#555" stroke-width="0.7"/></svg>
<svg class="abs" style="left:207px;top:133px" width="8" height="9" viewBox="0 0 8 9"><path d="M1.5 1L6 4M1.5 7.5L6 4.5M1.5 4.2H6" stroke="#6cc48a" stroke-width="0.8"/><circle cx="1.6" cy="1.2" r="1.1" fill="#6cc48a"/><circle cx="1.6" cy="4.3" r="1.1" fill="#6cc48a"/><circle cx="1.6" cy="7.4" r="1.1" fill="#6cc48a"/><circle cx="6.4" cy="2" r="1" fill="#6cc48a"/><circle cx="6.4" cy="6.5" r="1" fill="#6cc48a"/></svg>
<div class="box" style="left:5px;top:152px;width:169.5px;height:13.5px"></div>
<svg class="abs" style="left:9px;top:157.2px" width="6" height="4" viewBox="0 0 6 4"><path d="M0.5 0.5L3 3L5.5 0.5" fill="none" stroke="#999" stroke-width="0.8"/></svg>
<div class="t" style="left:16px;top:154.5px;font-size:8px;color:#333">0.20mm Standard @BBL X1C</div>
<svg class="abs" style="left:192.5px;top:154.5px" width="8" height="8" viewBox="0 0 8 8"><path d="M0.8 0.8H5.8L7.2 2.2V7.2H0.8Z" fill="none" stroke="#555" stroke-width="0.9"/><rect x="2.2" y="4.3" width="3.6" height="2.9" fill="#555"/><rect x="2.2" y="0.8" width="3" height="1.6" fill="#555"/></svg>
<svg class="abs" style="left:204.5px;top:154px" width="9" height="9" viewBox="0 0 9 9"><circle cx="3.6" cy="3.6" r="2.7" fill="none" stroke="#555" stroke-width="0.9"/><path d="M5.6 5.6L8.3 8.3" stroke="#555" stroke-width="1"/></svg>
<div class="t" style="left:7.5px;top:175px;font-size:8.3px;color:#222;font-weight:bold;">Quality</div>
<div class="t" style="left:49.5px;top:175px;font-size:8.3px;color:#777;">Strength</div>
<div class="t" style="left:97px;top:175px;font-size:8.3px;color:#777;">Speed</div>
<div class="t" style="left:135.5px;top:175px;font-size:8.3px;color:#777;">Support</div>
<div class="t" style="left:180.5px;top:175px;font-size:8.3px;color:#777;">Others</div>
<div class="abs" style="left:6.5px;top:185.5px;width:30px;height:1.5px;background:#12b14b"></div>
<div class="abs" style="left:0;top:187px;width:218px;height:1px;background:#eee"></div>
<div class="grp" style="top:193.5px">Layer height</div>
<svg class="abs" style="left:3px;top:193.0px" width="9" height="9" viewBox="0 0 9 9"><rect x="0.5" y="1.5" width="8" height="6.5" rx="1" fill="#555"/><path d="M0.5 4H8.5M0.5 6H8.5" stroke="#fff" stroke-width="0.8"/></svg>
<div class="lbl" style="top:210.2px">Layer height</div>
<div class="inp" style="top:207.7px"><b>0.2</b><i>mm</i></div>
<div class="lbl" style="top:225.9px">First layer height</div>
<div class="inp" style="top:223.4px"><b>0.2</b><i>mm</i></div>
<div class="grp" style="top:243.0px">Line width</div>
<svg class="abs" style="left:3px;top:242.5px" width="9" height="9" viewBox="0 0 9 9"><path d="M0.5 2H8.5M0.5 4H8.5M1.5 4V8M7.5 4V8" stroke="#555" stroke-width="1.1" fill="none"/></svg>
<div class="lbl" style="top:259.8px">Default</div>
<div class="inp" style="top:257.3px"><b>0.42</b><i>mm</i></div>
<div class="lbl" style="top:275.6px">First layer</div>
<div class="inp" style="top:273.1px"><b>0.5</b><i>mm</i></div>
<div class="lbl" style="top:291.2px">Outer wall</div>
<div class="inp" style="top:288.7px"><b>0.42</b><i>mm</i></div>
<div class="lbl" style="top:306.9px">Inner wall</div>
<div class="inp" style="top:304.4px"><b>0.45</b><i>mm</i></div>
<div class="lbl" style="top:322.4px">Top surface</div>
<div class="inp" style="top:319.9px"><b>0.42</b><i>mm</i></div>
<div class="lbl" style="top:338.0px">Sparse infill</div>
<div class="inp" style="top:335.5px"><b>0.45</b><i>mm</i></div>
<div class="lbl" style="top:353.7px">Internal solid infill</div>
<div class="inp" style="top:351.2px"><b>0.42</b><i>mm</i></div>
<div class="lbl" style="top:369.4px">Support</div>
<div class="inp" style="top:366.9px"><b>0.42</b><i>mm</i></div>
<div class="grp" style="top:387.2px">Seam</div>
<svg class="abs" style="left:3px;top:386.7px" width="9" height="9" viewBox="0 0 9 9"><rect x="0.8" y="0.8" width="7.4" height="7.4" fill="#e8e8e8" stroke="#666" stroke-width="0.9"/><path d="M2.5 6.5L6 3" stroke="#888" stroke-width="0.9"/></svg>
<div class="lbl" style="top:403.4px">Seam position</div>
<div class="inp" style="top:400.9px"><svg class="abs" style="left:4px;top:4px" width="6" height="4" viewBox="0 0 6 4"><path d="M0.5 0.5L3 3L5.5 0.5" fill="none" stroke="#999" stroke-width="0.8"/></svg><b style="left:11px">Aligned</b></div>
<div class="grp" style="top:421.2px">Precision</div>
<svg class="abs" style="left:3px;top:420.7px" width="9" height="9" viewBox="0 0 9 9"><circle cx="4.5" cy="4.5" r="3" fill="none" stroke="#555" stroke-width="1.1"/><path d="M4.5 0V9M0 4.5H9" stroke="#555" stroke-width="1" stroke-dasharray="1.8 5.4"/></svg>
<div class="lbl" style="top:438.0px">Slice gap closing radius</div>
<div class="inp" style="top:435.5px"><b>0.049</b><i>mm</i></div>
<div class="lbl" style="top:453.6px">Resolution</div>
<div class="inp" style="top:451.1px"><b>0.012</b><i>mm</i></div>
<div class="lbl" style="top:469.5px">Arc fitting</div>
<div class="abs" style="left:127.5px;top:469.0px;width:9px;height:9px;background:#12b14b;border-radius:1px"><svg class="abs" style="left:1px;top:1.5px" width="7" height="6" viewBox="0 0 7 6"><path d="M1 3L2.8 4.8L6 1.2" fill="none" stroke="#fff" stroke-width="1.2"/></svg></div>
<div class="lbl" style="top:484.8px">X-Y hole compensation</div>
<div class="inp" style="top:482.3px"><b>0</b><i>mm</i></div>
<div class="lbl" style="top:500.6px">X-Y contour compensation</div>
<div class="inp" style="top:498.1px"><b>0</b><i>mm</i></div>
<div class="gl" style="top:197.5px;left:66px"></div>
<div class="gl" style="top:247.0px;left:58px"></div>
<div class="gl" style="top:391.2px;left:38px"></div>
<div class="gl" style="top:425.2px;left:54px"></div>
<div class="abs" style="left:210.5px;top:190.5px;width:8.5px;height:318px;background:#f3f3f3"></div>
<div class="abs" style="left:210.7px;top:199.4px;width:8.3px;height:175px;background:#cdcdcd"></div>
<svg class="abs" style="left:212.2px;top:193px" width="5" height="4" viewBox="0 0 5 4"><path d="M0.5 3L2.5 1L4.5 3" fill="none" stroke="#444" stroke-width="0.9"/></svg>
<svg class="abs" style="left:212.2px;top:500px" width="5" height="4" viewBox="0 0 5 4"><path d="M0.5 1L2.5 3L4.5 1" fill="none" stroke="#444" stroke-width="0.9"/></svg>
</div>
<div id="taskbar">
<svg class="abs" style="left:8px;top:6px" width="8" height="8" viewBox="0 0 8 8"><path d="M0 1.1L3.4 0.6V3.7H0ZM3.9 0.5L8 0V3.7H3.9ZM0 4.2H3.4V7.4L0 6.9ZM3.9 4.2H8V8L3.9 7.5Z" fill="#fff"/></svg>
<div class="abs" style="left:25px;top:0;width:150px;height:21px;background:#f3f3f3"></div>
<svg class="abs" style="left:31px;top:5px" width="9" height="10" viewBox="0 0 9 10"><circle cx="5.2" cy="3.8" r="2.9" fill="none" stroke="#333" stroke-width="0.9"/><path d="M3.2 6L0.6 9.2" stroke="#333" stroke-width="1"/></svg>
<div class="t" style="left:46px;top:6px;font-size:7.7px;color:#444">Type here to search</div>
<svg class="abs" style="left:136px;top:1px" width="36" height="18" viewBox="0 0 36 18"><path d="M1 3.5Q8 1 16 3.5" fill="none" stroke="#c0183a" stroke-width="1.2"/><rect x="2" y="3.5" width="6" height="4.5" rx="1.5" fill="#3b3f8f" stroke="#c0183a" stroke-width="1"/><rect x="10" y="3.5" width="6" height="4.5" rx="1.5" fill="#3b3f8f" stroke="#c0183a" stroke-width="1"/><ellipse cx="6" cy="13" rx="5.5" ry="2.6" fill="#3d8be0"/><ellipse cx="11" cy="14.5" rx="5" ry="2.4" fill="#5aa7f0"/><path d="M20 1.5H26V10Q26 11 27 11.5L31.5 13Q33.5 14 33 16.5H19Q18 12 20 8Z" fill="#f5c518" stroke="#c99700" stroke-width="0.6"/><path d="M24 1.5H29V9L33 11Q35 12 34.5 14.5" fill="#e2b007" opacity="0.6"/></svg>
<svg class="abs" style="left:182px;top:5px" width="10" height="10" viewBox="0 0 10 10"><rect x="0.5" y="2" width="6" height="6" fill="none" stroke="#fff" stroke-width="0.9"/><path d="M8 1V9M9.5 2.5V7.5" stroke="#fff" stroke-width="0.8"/></svg>
<svg class="abs" style="left:207.5px;top:4.5px" width="12" height="11" viewBox="0 0 12 11"><path d="M0.5 1H5L6 2.2H11.5V10H0.5Z" fill="#f7c948"/><rect x="0.5" y="3.8" width="11" height="6.2" fill="#fbe08a"/><rect x="2.5" y="6.5" width="7" height="3.5" fill="#4aa3e8"/></svg>
<svg class="abs" style="left:233.5px;top:5px" width="12" height="10" viewBox="0 0 12 10"><rect x="0.3" y="1.5" width="11.4" height="8" rx="0.8" fill="#1a8fe3"/><path d="M0.5 1.2L6 5.8L11.5 1.2Z" fill="#8fd0ff"/><path d="M0.5 2L6 6.3L11.5 2" fill="none" stroke="#fff" stroke-width="0.7"/></svg>
<svg class="abs" style="left:258.5px;top:4.5px" width="11" height="11" viewBox="0 0 11 11"><rect x="0.5" y="0.5" width="10" height="10" rx="1.2" fill="#5c6b78"/><rect x="2" y="2" width="7" height="7" fill="#e9a23b"/><path d="M4.3 3.5L7.5 5.5L4.3 7.5Z" fill="#fff"/></svg>
<svg class="abs" style="left:284px;top:4px" width="12" height="12" viewBox="0 0 12 12"><circle cx="6" cy="6" r="5.8" fill="#e33b2e"/><path d="M6 6L0.9 3.2A5.8 5.8 0 0 0 5 11.7L8 7.5Z" fill="#2ba24c"/><path d="M6 6L8.2 7.6L5 11.7A5.8 5.8 0 0 0 11.4 3.9H6Z" fill="#fcc934"/><circle cx="6" cy="6" r="2.7" fill="#fff"/><circle cx="6" cy="6" r="2.1" fill="#2a7de1"/></svg>
<svg class="abs" style="left:309px;top:4px" width="13" height="12" viewBox="0 0 13 12"><ellipse cx="6.5" cy="6" rx="6" ry="4" fill="#dfe6ee" transform="rotate(-25 6.5 6)"/><ellipse cx="6.5" cy="6" rx="4" ry="2.4" fill="#4a78b5" transform="rotate(-25 6.5 6)"/><circle cx="4" cy="8.5" r="1.6" fill="#d13b3b"/><circle cx="9.5" cy="3.5" r="1.3" fill="#fff"/></svg>
<svg class="abs" style="left:335px;top:4px" width="12" height="12" viewBox="0 0 12 12"><circle cx="6" cy="6" r="3.4" fill="none" stroke="#fff" stroke-width="2.1"/><g stroke="#fff" stroke-width="2"><path d="M6 0.3V2.2M6 9.8V11.7M0.3 6H2.2M9.8 6H11.7M2 2L3.3 3.3M8.7 8.7L10 10M2 10L3.3 8.7M8.7 3.3L10 2"/></g><circle cx="6" cy="6" r="1.7" fill="#1c3040"/></svg>
<div class="abs" style="left:357px;top:0;width:25px;height:20px;background:#2a4152"></div>
<svg class="abs" style="left:361px;top:3.5px" width="14" height="13" viewBox="0 0 14 13"><circle cx="6" cy="6.5" r="5.6" fill="#e33b2e"/><path d="M6 6.5L1 3.8A5.6 5.6 0 0 0 5 12L8 8Z" fill="#2ba24c"/><path d="M6 6.5L8.2 8L5 12A5.6 5.6 0 0 0 11.3 4.5H6Z" fill="#fcc934"/><circle cx="6" cy="6.5" r="2.5" fill="#fff"/><circle cx="6" cy="6.5" r="1.9" fill="#2a7de1"/><circle cx="10.5" cy="9.5" r="3" fill="#e05a8a"/></svg>
<div class="abs" style="left:357px;top:19px;width:25px;height:1px;background:#7fb4e0"></div>
<div class="abs" style="left:383px;top:0;width:25px;height:20px;background:#2a4152"></div>
<div class="abs" style="left:386.5px;top:3px;width:12px;height:13px;background:#f26a1b;border-radius:1px"></div>
<div class="t" style="left:390px;top:4.5px;font-size:9px;font-weight:bold;color:#fff">F</div>
<div class="abs" style="left:383px;top:19px;width:25px;height:1px;background:#7fb4e0"></div>
<div class="abs" style="left:408px;top:0;width:25px;height:20px;background:#3a5468"></div>
<div class="abs" style="left:413px;top:3.5px;width:11px;height:13px;background:#12b14b;border-radius:1px"></div>
<svg class="abs" style="left:415.5px;top:6px" width="6" height="8" viewBox="0 0 6 8"><path d="M0.5 0.5H2.5V7.5H0.5ZM3.5 0.5H5.5V3.2L3.5 2.4ZM3.5 3.6L5.5 4.4V7.5H3.5Z" fill="#fff"/></svg>
<div class="abs" style="left:408px;top:19px;width:25px;height:1px;background:#9fcdf2"></div>
<div class="t" style="left:764.5px;top:6.5px;font-size:6.5px;color:#f0f0f0">Links</div>
<div class="t" style="left:783px;top:1px;font-size:7px;color:#f0f0f0">&#187;</div>
<svg class="abs" style="left:833px;top:3.5px" width="15" height="12" viewBox="0 0 15 12"><path d="M3.5 10.5A3 3 0 0 1 3.3 4.6A4 4 0 0 1 10.8 4A3.3 3.3 0 0 1 11 10.5Z" fill="#d7e3f0"/><path d="M5 11.5A2.6 2.6 0 0 1 5 6.5A3.4 3.4 0 0 1 11.5 6.6A2.5 2.5 0 0 1 11.5 11.5Z" fill="#9db7d4"/><circle cx="11" cy="3" r="2.6" fill="#e23b3b"/></svg>
<div class="t" style="left:850px;top:6px;font-size:7.6px;color:#f2f2f2">4&#176;C&nbsp;&nbsp;Cloudy</div>
<svg class="abs" style="left:901px;top:8px" width="7" height="5" viewBox="0 0 7 5"><path d="M0.5 4L3.5 1L6.5 4" fill="none" stroke="#eee" stroke-width="0.9"/></svg>
<svg class="abs" style="left:912.5px;top:6px" width="9" height="8" viewBox="0 0 9 8"><rect x="1.5" y="1.5" width="7" height="5" rx="0.8" fill="#e8e8e8"/><rect x="0" y="3" width="1.5" height="2" fill="#e8e8e8"/></svg>
<svg class="abs" style="left:924.5px;top:5.5px" width="9" height="9" viewBox="0 0 9 9"><path d="M0.5 3.2H2.2L4.5 1V8L2.2 5.8H0.5Z" fill="none" stroke="#e8e8e8" stroke-width="0.8"/><path d="M5.8 3Q6.8 4.5 5.8 6M7 2Q8.6 4.5 7 7" fill="none" stroke="#e8e8e8" stroke-width="0.7"/></svg>
<div class="t" style="left:947px;top:3px;font-size:6.3px;color:#f2f2f2">09:50</div>
<div class="t" style="left:939.5px;top:11.5px;font-size:6.3px;color:#f2f2f2">10/01/2024</div>
<svg class="abs" style="left:978px;top:4.5px" width="13" height="12" viewBox="0 0 13 12"><path d="M0.8 0.8H9.2V7H4L2 9V7H0.8Z" fill="#f0f0f0"/><path d="M2.5 2.8H7.5M2.5 4.6H7.5" stroke="#1c3040" stroke-width="0.7"/><circle cx="9.5" cy="8.5" r="3" fill="#1c3040" stroke="#f0f0f0" stroke-width="0.8"/><path d="M9.7 6.9V10.2" stroke="#f0f0f0" stroke-width="0.8"/></svg>
</div>
</body></html>
